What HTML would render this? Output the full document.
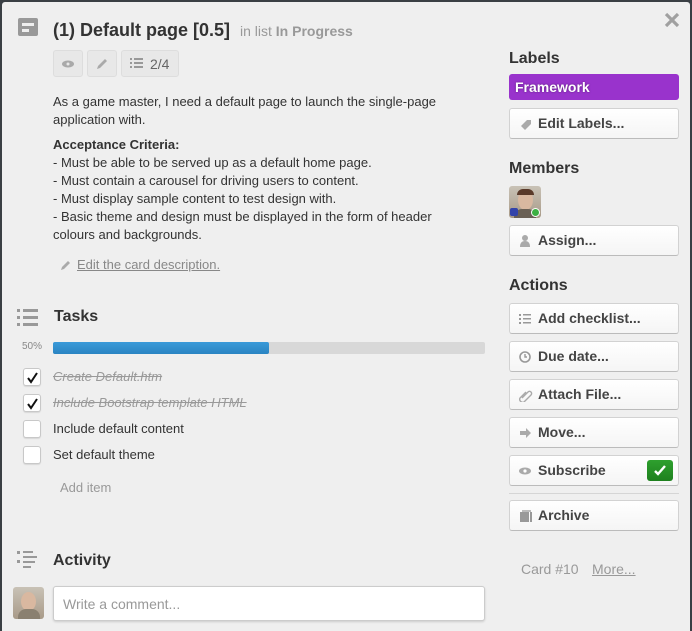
<!DOCTYPE html>
<html><head><meta charset="utf-8"><style>
*{margin:0;padding:0;box-sizing:border-box}
body{width:692px;height:631px;overflow:hidden;background:#3a3f44;font-family:"Liberation Sans",Arial,sans-serif;color:#333;position:relative}
#card{position:absolute;left:2px;top:2px;width:688px;height:629px;background:#efefef;border-radius:3px 3px 0 0}
.a{position:absolute;white-space:nowrap}
.t{font-size:13px;line-height:18px}
.btn{position:absolute;left:509px;width:170px;height:31px;background:linear-gradient(#fff,#f5f5f5);border:1px solid #d2d2d2;border-bottom-color:#bbb;border-radius:3px;font-weight:bold;font-size:14px;color:#444;line-height:29px;padding-left:28px}
.btn svg{position:absolute;left:9px;top:8px}
.h{font-weight:bold;font-size:16px;color:#333}
.cb{position:absolute;left:23px;width:18px;height:18px;background:#fff;border:1px solid #c8c8c8;border-radius:3px;box-shadow:0 1px 1px rgba(0,0,0,.1)}
.sb{position:absolute;top:50px;height:27px;border:1px solid #ddd;border-radius:3px;background:#e8e8e8}
.av{position:absolute;width:32px;height:32px;border-radius:3px;background:linear-gradient(#c9c2b6,#a89a88);overflow:hidden}
</style></head><body><div id="card"></div>
<div class="a" style="left:18px;top:18px;width:20px;height:18px;background:#999;border-radius:2px"></div>
<div class="a" style="left:22px;top:23px;width:12px;height:3px;background:#efefef"></div>
<div class="a" style="left:22px;top:29px;width:7px;height:3px;background:#efefef"></div>
<div class="a" style="left:53px;top:20px;font-size:18px;font-weight:bold;color:#333">(1) Default page [0.5]</div>
<div class="a" style="left:240px;top:23px;font-size:14px;color:#999">in list <b>In Progress</b></div>
<svg class="a" style="left:664px;top:12px" width="16" height="16"><path d="M2 2l12 12M14 2L2 14" stroke="#a0a0a0" stroke-width="3.2"/></svg>
<div class="sb" style="left:53px;width:30px"><svg width="28" height="25"><ellipse cx="14" cy="13" rx="6" ry="3.5" fill="#aaa"/><circle cx="14" cy="13" r="1.5" fill="#e8e8e8"/></svg></div>
<div class="sb" style="left:87px;width:30px"><svg width="28" height="25"><path d="M9 18l1-3 7-7 2 2-7 7z" fill="#aaa"/></svg></div>
<div class="sb" style="left:121px;width:58px"><svg width="24" height="25" style="position:absolute;left:5px"><g fill="#999"><rect x="3" y="7" width="2" height="2"/><rect x="3" y="11" width="2" height="2"/><rect x="3" y="15" width="2" height="2"/><rect x="7" y="7" width="9" height="2"/><rect x="7" y="11" width="9" height="2"/><rect x="7" y="15" width="9" height="2"/></g></svg><span class="a" style="left:28px;top:5px;font-size:14px;color:#666">2/4</span></div>
<div class="a t" style="left:53px;top:93px">As a game master, I need a default page to launch the single-page<br>application with.</div>
<div class="a t" style="left:53px;top:136px"><b>Acceptance Criteria:</b><br>- Must be able to be served up as a default home page.<br>- Must contain a carousel for driving users to content.<br>- Must display sample content to test design with.<br>- Basic theme and design must be displayed in the form of header<br>colours and backgrounds.</div>
<svg class="a" style="left:59px;top:258px" width="14" height="14"><path d="M2 12l1-3 6-6 2 2-6 6z" fill="#aaa"/></svg>
<div class="a t" style="left:77px;top:256px;color:#888;text-decoration:underline">Edit the card description.</div>
<svg class="a" style="left:17px;top:308px" width="22" height="20"><g fill="#999"><rect x="0" y="1" width="3" height="3"/><rect x="0" y="8" width="3" height="3"/><rect x="0" y="15" width="3" height="3"/><rect x="6" y="1" width="15" height="3"/><rect x="6" y="8" width="15" height="3"/><rect x="6" y="15" width="15" height="3"/></g></svg>
<div class="a h" style="left:54px;top:308px">Tasks</div>
<div class="a" style="left:22px;top:341px;font-size:10px;color:#888">50%</div>
<div class="a" style="left:53px;top:342px;width:432px;height:12px;background:#d8d8d8;border-radius:2px"></div>
<div class="a" style="left:53px;top:342px;width:216px;height:12px;background:linear-gradient(#3a9ad9,#2a84c2);border-radius:2px"></div>
<div class="cb" style="top:368px"><svg class="a" style="left:2px;top:2px" width="13" height="13"><path d="M2 7l3 4 6-9" fill="none" stroke="#111" stroke-width="2"/></svg></div>
<div class="cb" style="top:394px"><svg class="a" style="left:2px;top:2px" width="13" height="13"><path d="M2 7l3 4 6-9" fill="none" stroke="#111" stroke-width="2"/></svg></div>
<div class="cb" style="top:420px"></div>
<div class="cb" style="top:446px"></div>
<div class="a t" style="left:53px;top:368px;color:#999;font-style:italic;text-decoration:line-through">Create Default.htm</div>
<div class="a t" style="left:53px;top:394px;color:#999;font-style:italic;text-decoration:line-through">Include Bootstrap template HTML</div>
<div class="a t" style="left:53px;top:420px">Include default content</div>
<div class="a t" style="left:53px;top:446px">Set default theme</div>
<div class="a t" style="left:60px;top:479px;color:#999">Add item</div>
<svg class="a" style="left:17px;top:551px" width="22" height="20"><g fill="#999"><rect x="0" y="0" width="3" height="3"/><rect x="0" y="9" width="3" height="3"/><rect x="6" y="0" width="10" height="2"/><rect x="6" y="5" width="14" height="2"/><rect x="6" y="10" width="12" height="2"/><rect x="6" y="15" width="8" height="2"/></g></svg>
<div class="a h" style="left:53px;top:552px">Activity</div>
<div class="av" style="left:13px;top:587px;width:31px"><div class="a" style="left:8px;top:5px;width:15px;height:19px;border-radius:50%;background:#d9b8a0"></div><div class="a" style="left:5px;top:22px;width:22px;height:12px;border-radius:8px 8px 0 0;background:#8a8070"></div></div>
<div class="a" style="left:53px;top:586px;width:432px;height:35px;background:#fff;border:1px solid #ccc;border-radius:3px;box-shadow:0 1px 2px rgba(0,0,0,.15);font-size:14px;color:#999;padding:9px 0 0 9px">Write a comment...</div>
<div class="a h" style="left:509px;top:50px">Labels</div>
<div class="a" style="left:509px;top:74px;width:170px;height:26px;background:#9933cc;border-radius:3px;color:#fff;font-weight:bold;font-size:14px;line-height:26px;padding-left:6px;text-shadow:0 0 2px rgba(0,0,0,.4)">Framework</div>
<div class="btn" style="top:108px"><svg width="14" height="14"><path d="M2 9l6-6h4v4l-6 6z" fill="#aaa"/></svg>Edit Labels...</div>
<div class="a h" style="left:509px;top:160px">Members</div>
<div class="av" style="left:509px;top:186px"><div class="a" style="left:9px;top:4px;width:15px;height:20px;border-radius:50%;background:#d9b8a0"></div><div class="a" style="left:8px;top:3px;width:17px;height:6px;border-radius:8px 8px 0 0;background:#5a3a2a"></div><div class="a" style="left:5px;top:23px;width:22px;height:12px;border-radius:8px 8px 0 0;background:#6a6055"></div><div class="a" style="left:1px;top:22px;width:8px;height:8px;background:#3344aa;border-radius:2px"></div><div class="a" style="left:22px;top:22px;width:9px;height:9px;background:#3cb043;border:1px solid #fff;border-radius:50%"></div></div>
<div class="btn" style="top:225px"><svg width="14" height="14"><circle cx="6" cy="4" r="3" fill="#aaa"/><path d="M1 13q0-6 5-6t5 6z" fill="#aaa"/></svg>Assign...</div>
<div class="a h" style="left:509px;top:277px">Actions</div>
<div class="btn" style="top:303px"><svg width="14" height="14"><g fill="#999"><rect x="0" y="2" width="2" height="2"/><rect x="0" y="6" width="2" height="2"/><rect x="0" y="10" width="2" height="2"/><rect x="4" y="2" width="8" height="1.5"/><rect x="4" y="6" width="8" height="1.5"/><rect x="4" y="10" width="8" height="1.5"/></g></svg>Add checklist...</div>
<div class="btn" style="top:341px"><svg width="14" height="14"><circle cx="6" cy="7" r="5" fill="none" stroke="#999" stroke-width="1.6"/><path d="M6 4v3h2" fill="none" stroke="#999" stroke-width="1.4"/></svg>Due date...</div>
<div class="btn" style="top:379px"><svg width="14" height="14"><path d="M3 10l6-6a2 2 0 0 1 3 3l-7 7a3 3 0 0 1-4-4l6-6" fill="none" stroke="#aaa" stroke-width="1.4"/></svg>Attach File...</div>
<div class="btn" style="top:417px"><svg width="14" height="14"><path d="M1 5h6V2l5 5-5 5V9H1z" fill="#aaa"/></svg>Move...</div>
<div class="btn" style="top:455px"><svg width="14" height="14"><ellipse cx="6" cy="7" rx="6" ry="3.5" fill="#aaa"/><circle cx="6" cy="7" r="1.6" fill="#fff"/></svg>Subscribe<div class="a" style="left:137px;top:4px;width:26px;height:21px;background:linear-gradient(#2ea02e,#1e801e);border-radius:3px"><svg class="a" style="left:6px;top:4px" width="14" height="13"><path d="M2 7l3 3 7-8" fill="none" stroke="#fff" stroke-width="2.4"/></svg></div></div>
<div class="a" style="left:509px;top:493px;width:170px;height:1px;background:#d5d5d5"></div>
<div class="btn" style="top:500px"><svg width="14" height="14"><rect x="1" y="3" width="9" height="10" fill="#999"/><rect x="11" y="3" width="2" height="10" fill="#999"/><rect x="3" y="1" width="9" height="2" fill="#bbb"/></svg>Archive</div>
<div class="a" style="left:521px;top:561px;font-size:14px;color:#999">Card #10</div>
<div class="a" style="left:592px;top:561px;font-size:14px;color:#999;text-decoration:underline">More...</div>
</body></html>
